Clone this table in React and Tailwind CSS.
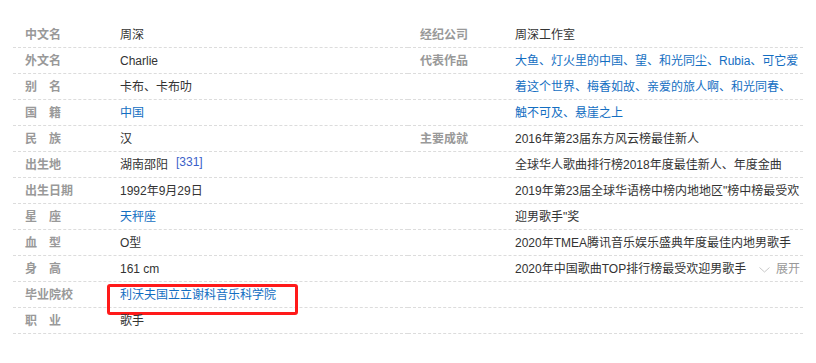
const left = [
  { label: "中文名", value: "周深" },
  { label: "外文名", value: "Charlie" },
  { label: "别　名", value: "卡布、卡布叻" },
  { label: "国　籍", value: "中国", link: true },
  { label: "民　族", value: "汉" },
  { label: "出生地", value: "湖南邵阳", sup: "[331]" },
  { label: "出生日期", value: "1992年9月29日" },
  { label: "星　座", value: "天秤座", link: true },
  { label: "血　型", value: "O型" },
  { label: "身　高", value: "161 cm" },
  { label: "毕业院校", value: "利沃夫国立立谢科音乐科学院", link: true, boxed: true },
  { label: "职　业", value: "歌手" },
];

const right = [
  { label: "经纪公司", value: "周深工作室" },
  { label: "代表作品", value: "大鱼、灯火里的中国、望、和光同尘、Rubia、可它爱", link: true },
  { label: "", value: "着这个世界、梅香如故、亲爱的旅人啊、和光同春、", link: true },
  { label: "", value: "触不可及、悬崖之上", link: true },
  { label: "主要成就", value: "2016年第23届东方风云榜最佳新人" },
  { label: "", value: "全球华人歌曲排行榜2018年度最佳新人、年度金曲" },
  { label: "", value: "2019年第23届全球华语榜中榜内地地区\"榜中榜最受欢" },
  { label: "", value: "迎男歌手\"奖" },
  { label: "", value: "2020年TMEA腾讯音乐娱乐盛典年度最佳内地男歌手" },
  { label: "", value: "2020年中国歌曲TOP排行榜最受欢迎男歌手", more: true },
  { label: "", value: "" },
  { label: "", value: "" },
];

const Row = ({ item }) => (
  <div className="relative flex items-center h-[26px] border-b border-dashed border-[#dcdcdc] pl-3">
    <div className="w-[95px] shrink-0 font-bold text-[#999]">{item.label}</div>
    <div
      className={`whitespace-nowrap ${item.link ? "text-[#136ec2]" : "text-[#333]"}`}
    >
      {item.value}
      {item.sup && (
        <sup className="ml-2 text-[12px] text-[#3b5fc9] relative -top-[3px]">
          {item.sup}
        </sup>
      )}
    </div>
    {item.more && (
      <div className="ml-auto flex items-center gap-[6px] text-[#999] pr-[3px]">
        <svg width="11" height="6" viewBox="0 0 11 6" className="mt-[2px]">
          <polyline points="0.5,0.5 5.5,5 10.5,0.5" fill="none" stroke="#c8c8c8" strokeWidth="1" />
        </svg>
        <span>展开</span>
      </div>
    )}
    {item.boxed && (
      <div className="absolute left-[94px] top-[2px] w-[191px] h-[31px] border-[3px] border-[#ff1a1a] rounded-[3px]" />
    )}
  </div>
);

export default function App() {
  return (
    <div
      className="w-[816px] h-[363px] bg-white pt-[22px] pl-[13px] text-[12px] leading-none"
      style={{ fontFamily: '"Liberation Sans", "Noto Sans CJK SC", sans-serif' }}
    >
      <div className="flex w-[790px]">
        <div className="w-[395px]">
          {left.map((item, i) => (
            <Row key={i} item={item} />
          ))}
        </div>
        <div className="w-[395px]">
          {right.map((item, i) => (
            <Row key={i} item={item} />
          ))}
        </div>
      </div>
    </div>
  );
}
